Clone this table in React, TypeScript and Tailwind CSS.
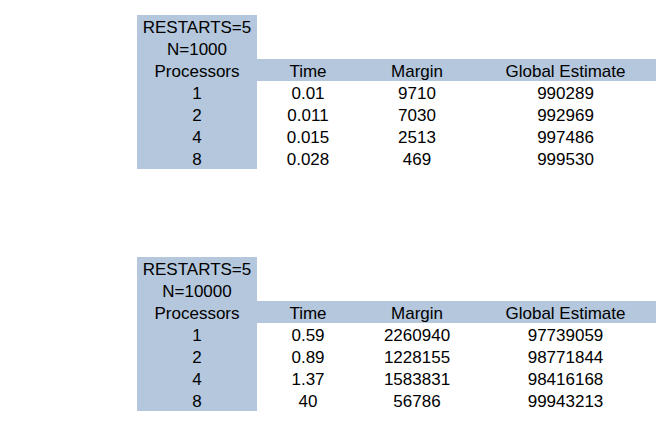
import React from 'react';

type Block = {
  n: string;
  rows: [string, string, string, string][];
};

const blocks: Block[] = [
  {
    n: 'N=1000',
    rows: [
      ['1', '0.01', '9710', '990289'],
      ['2', '0.011', '7030', '992969'],
      ['4', '0.015', '2513', '997486'],
      ['8', '0.028', '469', '999530'],
    ],
  },
  {
    n: 'N=10000',
    rows: [
      ['1', '0.59', '2260940', '97739059'],
      ['2', '0.89', '1228155', '98771844'],
      ['4', '1.37', '1583831', '98416168'],
      ['8', '40', '56786', '99943213'],
    ],
  },
];

// one spreadsheet-ish table: blue first column, blue header row
const ResultTable = ({ block }: { block: Block }) => {
  const cell = 'h-[22px] leading-[22px] pt-[2px] text-center whitespace-nowrap';
  return (
    <div className="grid grid-cols-[120px_102px_116px_181px]">
      <div className={`${cell} bg-[#b4c7dc]`}>RESTARTS=5</div>
      <div className="col-span-3" />
      <div className={`${cell} bg-[#b4c7dc]`}>{block.n}</div>
      <div className="col-span-3" />
      <div className={`${cell} bg-[#b4c7dc]`}>Processors</div>
      <div className={`${cell} bg-[#b4c7dc]`}>Time</div>
      <div className={`${cell} bg-[#b4c7dc]`}>Margin</div>
      <div className={`${cell} bg-[#b4c7dc]`}>Global Estimate</div>
      {block.rows.map((r) => (
        <React.Fragment key={r[0]}>
          <div className={`${cell} bg-[#b4c7dc]`}>{r[0]}</div>
          <div className={cell}>{r[1]}</div>
          <div className={cell}>{r[2]}</div>
          <div className={cell}>{r[3]}</div>
        </React.Fragment>
      ))}
    </div>
  );
};

export default function App() {
  return (
    <div
      className="w-[656px] h-[438px] bg-white text-black text-[17px] pt-[15px] pl-[137px] flex flex-col gap-[88px] overflow-hidden"
      style={{ fontFamily: '"Liberation Sans", Arial, sans-serif' }}
    >
      {blocks.map((b) => (
        <ResultTable key={b.n} block={b} />
      ))}
    </div>
  );
}
